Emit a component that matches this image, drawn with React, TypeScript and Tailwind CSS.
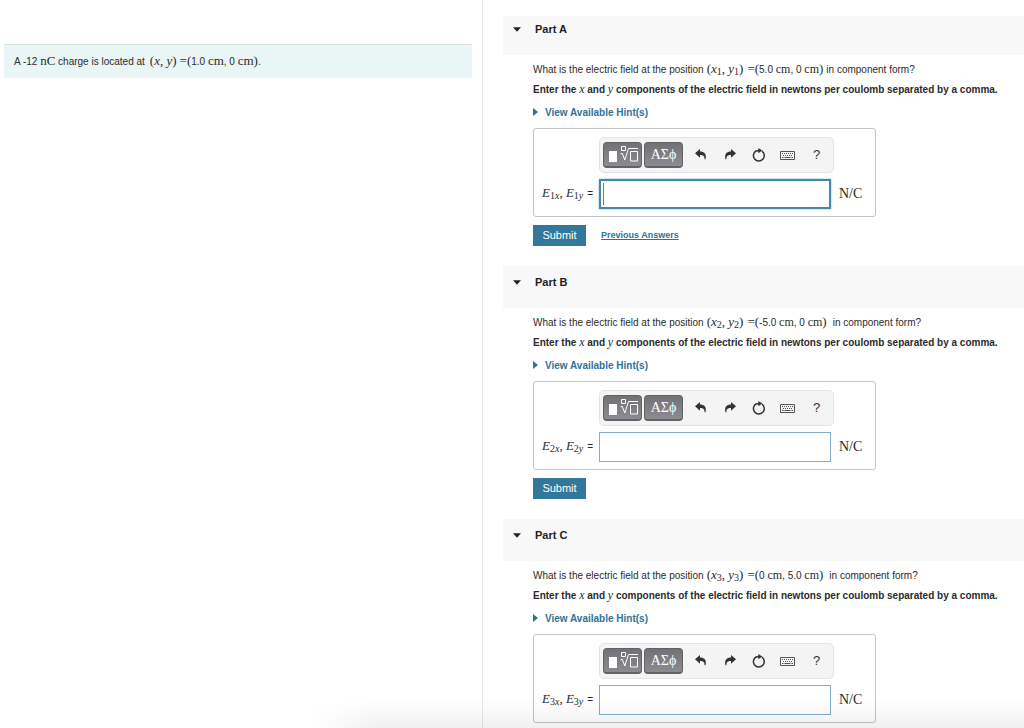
import React from "react";

const Sub = ({ children }: { children: React.ReactNode }) => (
  <sub className="bottom-[-2px] align-baseline text-[10px] leading-none">{children}</sub>
);

const M = ({ children, className = "text-[13px]" }: { children: React.ReactNode; className?: string }) => (
  <span className={`font-['Liberation_Serif',serif] leading-none ${className}`}>{children}</span>
);

const FieldVar = ({ n, axis }: { n: string; axis: string }) => (
  <M>
    <i>E</i>
    <Sub>
      {n}
      <i>{axis}</i>
    </Sub>
  </M>
);

const Caret = () => (
  <svg width="8" height="5" viewBox="0 0 8 5" aria-hidden="true">
    <path d="M0 .3h8L4 4.7z" fill="#222" />
  </svg>
);

function Toolbar() {
  const dark =
    "flex h-[26px] w-[39px] items-center justify-center rounded-[4px] border border-b-2 border-[#626266] bg-linear-to-b from-[#727276] to-[#8c8c90] text-white";
  const plain = "flex h-[26px] w-[29px] items-center justify-center text-[#333]";
  return (
    <div className="flex h-9 w-[235px] items-center rounded-[5px] border border-[#e4e4e4] bg-[#f4f4f4] pb-px pl-[3px]">
      <button type="button" aria-label="Templates" className={dark}>
        <svg width="30" height="18" viewBox="0 0 30 18" fill="none" stroke="#fff">
          <path d="M1 6h8v11H1z" fill="#fff" stroke="none" />
          <path d="M13.500 1.500h4v4h-4zM22.500 6.500h7v9.500h-7z" />
          <path d="M12.500 9l1.700-.8 2.600 6.800L20.500 3.500H30" />
        </svg>
      </button>
      <button
        type="button"
        aria-label="Symbols"
        className={`${dark} ml-[2px] font-['Liberation_Serif',serif] text-[14px]`}
      >
        ΑΣϕ
      </button>
      <button type="button" aria-label="Undo" className={`${plain} ml-[3px]`}>
        <svg width="12" height="12" viewBox="0 0 12 12" fill="currentColor">
          <path d="M0 4.300L5 0v2.600c4.200 0 6.700 2.200 5.600 7.700h-1C9.500 7.300 8.400 6.200 5 6.100v2.600z" />
        </svg>
      </button>
      <button type="button" aria-label="Redo" className={plain}>
        <svg width="12" height="12" viewBox="0 0 12 12" fill="currentColor">
          <path d="M12 4.300L7 0v2.600C2.800 2.600.3 4.800 1.400 10.300h1C2.500 7.300 3.600 6.200 7 6.100v2.600z" />
        </svg>
      </button>
      <button type="button" aria-label="Reset" className={plain}>
        <svg width="14" height="14" viewBox="0 0 14 14" fill="none">
          <path d="M10 3.200A5.400 5.400 0 1 1 4 3L7.500 2.500" stroke="currentColor" strokeWidth="1.500" />
          <path d="M6.300 0l4 2.500-4 2.700z" fill="currentColor" />
        </svg>
      </button>
      <button type="button" aria-label="Keyboard shortcuts" className={plain}>
        <svg width="15" height="12" viewBox="0 0 15 12" fill="none" stroke="#555">
          <path d="M.5 2.500h14v8H.5z" />
          <path d="M2 4.500h11M3 6.500h10" strokeDasharray="1 1" />
          <path d="M2 8.500h1.500M4.500 8.500h6M11.500 8.500H13" />
        </svg>
      </button>
      <button type="button" aria-label="Help" className={`${plain} text-[13px]`}>
        ?
      </button>
    </div>
  );
}

type PartProps = {
  letter: string;
  n: string;
  x: string;
  y: string;
  wide?: boolean;
  focused?: boolean;
  previous?: boolean;
  submit?: boolean;
  headClass: string;
};

function Part({ letter, n, x, y, wide, focused, previous, submit, headClass }: PartProps) {
  const id = `answer-${letter}`;
  return (
    <section>
      <header className={`bg-[#f8f8f8] pl-[10px] ${headClass}`}>
        <button type="button" className="flex h-4 items-center gap-[14px] text-[11px] font-bold text-[#222]">
          <Caret />
          Part {letter}
        </button>
      </header>
      <div className="pt-[7px] pl-[30px]">
        <p className="h-[21px] leading-[14px] whitespace-nowrap">
          What is the electric field at the position
          <M className="ml-[3px] text-[13px]">
            (<i>x</i>
            <Sub>{n}</Sub>, <i>y</i>
            <Sub>{n}</Sub>)
          </M>
          <M className="ml-1 text-[13px]">=(</M>
          {x} <M className="text-[12px]">cm</M>, {y} <M className="text-[12px]">cm</M>
          <M>)</M>
          <span className={wide ? "ml-[6px]" : "ml-[3px]"}>in component form?</span>
        </p>
        <p className="h-[22px] leading-[14px] font-bold whitespace-nowrap">
          Enter the <M className="text-[12px] font-normal italic">x</M> and{" "}
          <M className="text-[12px] font-normal italic">y</M> components of the electric field in newtons per
          coulomb separated by a comma.
        </p>
        <button type="button" className="flex h-[14px] items-center gap-[7px] font-bold text-[#2f7396]">
          <svg width="5" height="8" viewBox="0 0 5 8" aria-hidden="true">
            <path d="M0 0l5 4-5 4z" fill="currentColor" />
          </svg>
          View Available Hint(s)
        </button>
        <div className="mt-[9px] w-[343px] rounded-[3px] border border-[#c4c4c4] pt-2 pb-[7px]">
          <div className="pl-[65px]">
            <Toolbar />
          </div>
          <div className="mt-[6px] flex items-center">
            <label htmlFor={id} className="w-[65px] pb-[2px] pl-2 whitespace-nowrap">
              <FieldVar n={n} axis="x" />
              <M>, </M>
              <FieldVar n={n} axis="y" />
              <span className="ml-1">=</span>
            </label>
            <div className="relative">
              <input
                id={id}
                type="text"
                className={
                  focused
                    ? "block h-[30px] w-[232px] border-2 border-[#4388a8] px-1 shadow-[0_0_2px_#7fb6d0] outline-none"
                    : "block h-[30px] w-[232px] border border-[#7fb0c8] px-1 outline-none"
                }
              />
              {focused && <span className="absolute top-1 left-1 h-[22px] w-px bg-[#6a6fc4]" />}
            </div>
            <M className="ml-2 pb-px text-[14px]">N/C</M>
          </div>
        </div>
        {submit && (
          <div className="mt-2 mb-5 flex items-center gap-[15px]">
            <button type="button" className="h-[21px] w-[53px] bg-[#33789a] text-[11px] text-white">
              Submit
            </button>
            {previous && (
              <a href="#previous" className="text-[9px] font-bold text-[#2f7396] underline">
                Previous Answers
              </a>
            )}
          </div>
        )}
      </div>
    </section>
  );
}

export default function App() {
  return (
    <div className="relative flex min-h-screen overflow-hidden bg-white font-['Liberation_Sans',Arial,sans-serif] text-[10px] text-[#2b2b2b]">
      <aside className="w-[483px] shrink-0 border-r border-[#e1e7ec] pt-11 pr-[10px] pl-1">
        <p className="h-[34px] border-t border-[#dcdfe0] bg-[#eaf5f6] pl-[10px] leading-[33px] whitespace-nowrap">
          A -12 <M>nC</M> charge is located at
          <M className="ml-[5px] text-[13px]">
            (<i>x</i>, <i>y</i>)
          </M>
          <M className="ml-[3px] text-[13px]">=(</M>
          1.0 <M>cm</M>, 0 <M>cm</M>
          <M>)</M>.
        </p>
      </aside>
      <main className="min-w-0 grow pt-4 pl-5">
        <Part letter="A" n="1" x="5.0" y="0" focused previous submit headClass="h-[39px] pt-[5px]" />
        <Part letter="B" n="2" x="-5.0" y="0" wide submit headClass="h-[42px] pt-2" />
        <Part letter="C" n="3" x="0" y="5.0" wide headClass="h-[42px] pt-2" />
      </main>
      <div className="pointer-events-none absolute right-0 bottom-0 left-[310px] h-7 bg-linear-to-b from-transparent to-black/6 mask-[linear-gradient(to_right,transparent,black_70px)]" />
    </div>
  );
}
